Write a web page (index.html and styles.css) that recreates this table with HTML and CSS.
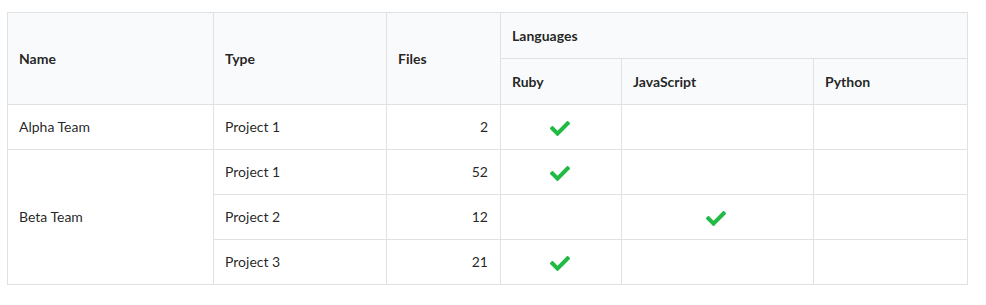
FILE: index.html
```html
<!DOCTYPE html>
<html lang="en">
<head>
<meta charset="utf-8">
<title>Teams</title>
<link rel="stylesheet" href="styles.css">
</head>
<body>
<div class="page">
<table class="grid">
  <colgroup>
    <col class="c-name"><col class="c-type"><col class="c-files"><col class="c-ruby"><col class="c-js"><col class="c-py">
  </colgroup>
  <thead>
    <tr class="hrow">
      <th rowspan="2">Name</th>
      <th rowspan="2">Type</th>
      <th rowspan="2">Files</th>
      <th colspan="3">Languages</th>
    </tr>
    <tr class="hrow">
      <th>Ruby</th>
      <th>JavaScript</th>
      <th>Python</th>
    </tr>
  </thead>
  <tbody>
    <tr class="brow">
      <td>Alpha Team</td>
      <td>Project 1</td>
      <td class="num">2</td>
      <td class="mid"><svg class="check" viewBox="0 64 512 384"><path d="M173.898 439.404l-166.4-166.4c-9.997-9.997-9.997-26.206 0-36.204l36.203-36.204c9.997-9.998 26.207-9.998 36.204 0L192 312.69 432.095 72.596c9.997-9.997 26.207-9.997 36.204 0l36.203 36.204c9.997 9.997 9.997 26.206 0 36.204l-294.4 294.401c-9.998 9.997-26.207 9.997-36.204-.001z"/></svg></td>
      <td></td>
      <td></td>
    </tr>
    <tr class="brow">
      <td rowspan="3">Beta Team</td>
      <td>Project 1</td>
      <td class="num">52</td>
      <td class="mid"><svg class="check" viewBox="0 64 512 384"><path d="M173.898 439.404l-166.4-166.4c-9.997-9.997-9.997-26.206 0-36.204l36.203-36.204c9.997-9.998 26.207-9.998 36.204 0L192 312.69 432.095 72.596c9.997-9.997 26.207-9.997 36.204 0l36.203 36.204c9.997 9.997 9.997 26.206 0 36.204l-294.4 294.401c-9.998 9.997-26.207 9.997-36.204-.001z"/></svg></td>
      <td></td>
      <td></td>
    </tr>
    <tr class="brow">
      <td>Project 2</td>
      <td class="num">12</td>
      <td></td>
      <td class="mid"><svg class="check" viewBox="0 64 512 384"><path d="M173.898 439.404l-166.4-166.4c-9.997-9.997-9.997-26.206 0-36.204l36.203-36.204c9.997-9.998 26.207-9.998 36.204 0L192 312.69 432.095 72.596c9.997-9.997 26.207-9.997 36.204 0l36.203 36.204c9.997 9.997 9.997 26.206 0 36.204l-294.4 294.401c-9.998 9.997-26.207 9.997-36.204-.001z"/></svg></td>
      <td></td>
    </tr>
    <tr class="brow">
      <td>Project 3</td>
      <td class="num">21</td>
      <td class="mid"><svg class="check" viewBox="0 64 512 384"><path d="M173.898 439.404l-166.4-166.4c-9.997-9.997-9.997-26.206 0-36.204l36.203-36.204c9.997-9.998 26.207-9.998 36.204 0L192 312.69 432.095 72.596c9.997-9.997 26.207-9.997 36.204 0l36.203 36.204c9.997 9.997 9.997 26.206 0 36.204l-294.4 294.401c-9.998 9.997-26.207 9.997-36.204-.001z"/></svg></td>
      <td></td>
      <td></td>
    </tr>
  </tbody>
</table>
</div>
</body>
</html>
```

FILE: styles.css
```css
html, body {
  margin: 0;
  background: #ffffff;
}
.page {
  padding: 12px 0 0 7px;
  font-family: Lato, "Open Sans", sans-serif;
  font-size: 14px;
  color: rgba(0, 0, 0, 0.87);
}
.grid {
  border-collapse: collapse;
  table-layout: fixed;
  width: 960px;
}
.c-name { width: 206px; }
.c-type { width: 173px; }
.c-files { width: 114px; }
.c-ruby { width: 121px; }
.c-js { width: 192px; }
.c-py { width: 154px; }
.grid th,
.grid td {
  border: 1px solid #e0e1e2;
  padding: 0 11px;
  line-height: 20px;
  vertical-align: middle;
}
.grid th {
  background: #f9fafb;
  font-weight: 700;
  text-align: left;
}
.hrow { height: 46px; }
.brow { height: 45px; }
.grid td.num {
  text-align: right;
  padding-right: 12px;
}
.grid td.mid {
  text-align: center;
}
.check {
  width: 20px;
  height: 15px;
  margin-right: 3px;
  fill: #21ba45;
  vertical-align: middle;
}
```
